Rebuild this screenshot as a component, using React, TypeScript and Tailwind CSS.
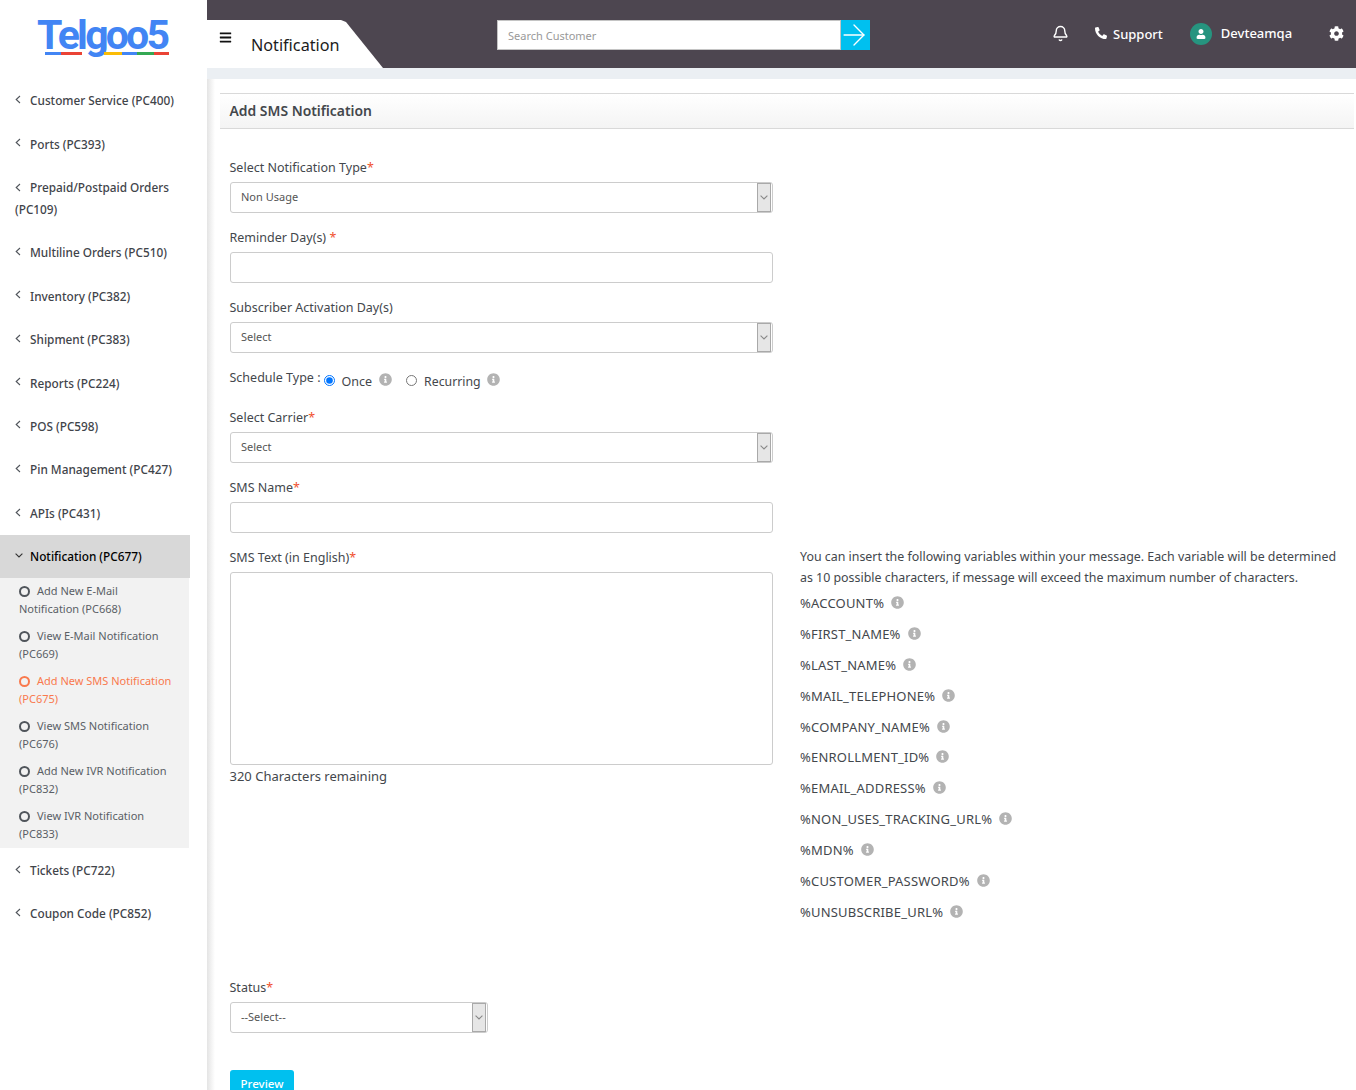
import React from "react";
import { ArrowRight, Bell } from "lucide-react";
import { FaBars, FaCog, FaInfoCircle, FaPhoneAlt, FaUser } from "react-icons/fa";

const navTop = [
  { t: "Customer Service (PC400)", h: "h-[44px]" },
  { t: "Ports (PC393)", h: "h-[43px]" },
  { t: "Prepaid/Postpaid Orders (PC109)", h: "h-[65px]", wrap: true },
  { t: "Multiline Orders (PC510)", h: "h-[44px]" },
  { t: "Inventory (PC382)", h: "h-[43px]" },
  { t: "Shipment (PC383)", h: "h-[44px]" },
  { t: "Reports (PC224)", h: "h-[43px]" },
  { t: "POS (PC598)", h: "h-[43px]" },
  { t: "Pin Management (PC427)", h: "h-[44px]" },
  { t: "APIs (PC431)", h: "h-[44px]" },
];
const subs = [
  ["Add New E-Mail", "Notification (PC668)"],
  ["View E-Mail Notification", "(PC669)"],
  ["Add New SMS Notification", "(PC675)"],
  ["View SMS Notification", "(PC676)"],
  ["Add New IVR Notification", "(PC832)"],
  ["View IVR Notification", "(PC833)"],
];
const vars = [
  "%ACCOUNT%", "%FIRST_NAME%", "%LAST_NAME%", "%MAIL_TELEPHONE%", "%COMPANY_NAME%", "%ENROLLMENT_ID%",
  "%EMAIL_ADDRESS%", "%NON_USES_TRACKING_URL%", "%MDN%", "%CUSTOMER_PASSWORD%", "%UNSUBSCRIBE_URL%",
];

function ChevLeft() {
  return (
    <svg width="6" height="9" viewBox="0 0 6 9" fill="none" className="inline-block shrink-0 mr-[9px] mb-[2px] align-middle">
      <path d="M5 1 L1.2 4.5 L5 8" stroke="#50555b" strokeWidth="1.1" />
    </svg>
  );
}

function ChevDown({ color = "#333", w = 8 }: { color?: string; w?: number }) {
  return (
    <svg width={w} height="5" viewBox="0 0 8 5" fill="none" className="shrink-0">
      <path d="M0.6 0.6 L4 4 L7.4 0.6" stroke={color} strokeWidth="1.1" />
    </svg>
  );
}

function NavItem({ t, h, wrap }: { t: string; h: string; wrap?: boolean }) {
  return (
    <div className={`${h} pl-[15px] pr-2 text-[11.8px] font-medium leading-[22px] text-[#3f444a] ${wrap ? "pt-[11px]" : "flex items-center"}`}>
      <ChevLeft />
      {t}
    </div>
  );
}

function Label({ text, req = true, space }: { text: string; req?: boolean; space?: boolean }) {
  return (
    <div className="h-[15px] leading-[15px] text-[12.5px] text-[#43474c] -ml-[0.5px]">
      {text}
      {space ? " " : ""}
      {req && <span className="text-[#f0502e]">*</span>}
    </div>
  );
}

function Select({ value, className = "w-[543px]" }: { value: string; className?: string }) {
  return (
    <div className={`${className} h-[31px] mt-[7px] border border-[#cccccc] rounded-[3px] flex items-center bg-white`}>
      <span className="flex-1 pl-[10px] text-[11px] text-[#555]">{value}</span>
      <span className="w-[14px] h-[29px] mr-[1px] bg-[#e6e6e6] border border-[#a9a9a9] flex items-center justify-center">
        <ChevDown color="#888" />
      </span>
    </div>
  );
}

function TextBox() {
  return <div className="w-[543px] h-[31px] mt-[7px] border border-[#cccccc] rounded-[3px] bg-white" />;
}

function Info({ className = "" }: { className?: string }) {
  return <FaInfoCircle size={13} className={`text-[#b3b3b3] ${className}`} />;
}

export default function App() {
  return (
    <div className="w-[1356px] h-[1090px] overflow-hidden flex bg-white font-['Noto_Sans','Open_Sans',sans-serif]">
      <aside className="w-[207px] shrink-0">
        <div className="h-[78px] relative">
          <span className="absolute left-[37px] top-[10px] font-['Roboto',sans-serif] font-bold text-[#4285f4] text-[41px] leading-[50px] tracking-[-2.8px]">Telgoo5</span>
          <div className="absolute left-[45px] top-[52px] flex h-[2.5px]">
            <i className="w-[16px] bg-[#4285f4]" />
            <i className="w-[21px] bg-[#ea4335]" />
            <i className="w-[22px] bg-transparent" />
            <i className="w-[18px] bg-[#fbbc05]" />
            <i className="w-[15px] bg-[#4285f4]" />
            <i className="w-[17px] bg-[#34a853]" />
            <i className="w-[15px] bg-[#ea4335]" />
          </div>
        </div>
        {navTop.map((n) => (
          <NavItem key={n.t} {...n} />
        ))}
        <div className="w-[190px] h-[43px] bg-[#d8d8d8] pl-[15px] flex items-center text-[11.8px] font-medium text-black">
          <span className="mr-[7px] mb-[2px] flex"><ChevDown /></span>
          Notification (PC677)
        </div>
        <div className="w-[189px] h-[270px] bg-[#f2f2f2] pl-[19px] pr-1 pt-[4px] text-[11px] leading-[18px] text-[#5a5f66]">
          {subs.map((s, i) => (
            <div key={s[0]} className={`h-[45px] ${i === 2 ? "text-[#f9794d]" : ""}`}>
              <div className="flex items-center">
                <span className={`w-[11px] h-[11px] rounded-full border-2 mr-[7px] ${i === 2 ? "border-[#f9794d]" : "border-[#50555b]"}`} />
                {s[0]}
              </div>
              <div>{s[1]}</div>
            </div>
          ))}
        </div>
        <NavItem t="Tickets (PC722)" h="h-[44px]" />
        <NavItem t="Coupon Code (PC852)" h="h-[42px]" />
      </aside>

      <div className="flex-1 min-w-0 flex flex-col">
        <header className="h-[68px] bg-[#4d4650] flex items-stretch shrink-0 relative">
          <div className="w-[176px] mt-[20px] h-[48px] bg-white [clip-path:polygon(0_0,134px_0,139px_2px,176px_100%,0_100%)] flex">
            <FaBars size={13} className="ml-[12px] mt-[11px] text-[#111]" />
            <span className="ml-[19px] mt-[13px] text-[16.2px] leading-[24px] text-[#1c1c1c]">Notification</span>
          </div>
          <div className="ml-[114px] mt-[20px] flex h-[30px]">
            <div className="w-[344px] bg-white border border-[#c4c4c4] pl-[10px] pt-[2px] flex items-center text-[11px] text-[#999]">Search Customer</div>
            <div className="w-[29px] bg-[#00c0ef] flex items-center justify-center overflow-hidden">
              <ArrowRight size={34} strokeWidth={0.95} className="text-white shrink-0 -ml-[4px]" />
            </div>
          </div>
          <div className="flex-1 flex items-center text-white text-[13px] font-medium">
            <Bell size={17} strokeWidth={2} className="ml-[182px] mb-[2px]" />
            <FaPhoneAlt size={12} className="ml-[26px] mb-[3px]" />
            <span className="ml-[6px] mt-[1px]">Support</span>
            <span className="ml-[27px] w-[22px] h-[22px] rounded-full bg-[#26947f] flex items-center justify-center">
              <FaUser size={10} />
            </span>
            <span className="ml-[9px] -mt-[1px]">Devteamqa</span>
            <FaCog size={15} className="ml-[37px] mb-[2px]" />
          </div>
        </header>
        <div className="h-[11px] bg-[#ebeff3] shrink-0" />
        <div className="flex-1 flex min-h-0">
          <div className="w-[8px] bg-gradient-to-r from-[#e4e4e4] to-white shrink-0" />
          <main className="flex-1 pl-[5px] pr-[2px] pt-[14px]">
            <div className="h-[36px] bg-gradient-to-b from-white to-[#f4f4f4] border-y border-[#d9d9d9] pl-[9.5px] flex items-center text-[13.9px] font-semibold text-[#43474c]">
              Add SMS Notification
            </div>
            <div className="pl-[10px] pt-[31px]">
              <Label text="Select Notification Type" />
              <Select value="Non Usage" />
              <div className="mt-[17px]"><Label text="Reminder Day(s)" space /></div>
              <TextBox />
              <div className="mt-[17px]"><Label text="Subscriber Activation Day(s)" req={false} /></div>
              <Select value="Select" />
              <div className="mt-[17px] h-[37px] flex items-start text-[12.5px] text-[#43474c] -ml-[0.5px]">
                <span className="leading-[15px]">Schedule Type :</span>
                <input type="radio" name="s" defaultChecked className="w-[11px] h-[11px] ml-[3px] mt-[5px] accent-[#0075ff]" />
                <span className="ml-[7px] mt-[4px] leading-[15px]">Once</span>
                <Info className="ml-[7px] mt-[3px]" />
                <input type="radio" name="s" className="w-[11px] h-[11px] ml-[14px] mt-[5px]" />
                <span className="ml-[7px] mt-[4px] leading-[15px] text-[12.3px]">Recurring</span>
                <Info className="ml-[6px] mt-[3px]" />
              </div>
              <div className="mt-[3px]"><Label text="Select Carrier" /></div>
              <Select value="Select" />
              <div className="mt-[17px]"><Label text="SMS Name" /></div>
              <TextBox />
              <div className="flex mt-[17px]">
                <div className="w-[543px] shrink-0">
                  <Label text="SMS Text (in English)" />
                  <div className="w-[543px] h-[193px] mt-[7px] border border-[#cccccc] rounded-[3px]" />
                  <div className="mt-[3px] text-[13px] leading-[17px] text-[#43474c] -ml-[0.5px]">320 Characters remaining</div>
                </div>
                <div className="ml-[27px] -mt-[4px] text-[#43474c]">
                  <p className="leading-[21px] text-[12.4px]">You can insert the following variables within your message. Each variable will be determined<br />as 10 possible characters, if message will exceed the maximum number of characters.</p>
                  <div className="mt-[5px] text-[13px] tracking-[0.2px]">
                    {vars.map((v) => (
                      <div key={v} className="h-[30.9px] flex items-start leading-[21px]">
                        {v}
                        <Info className="ml-[7px] mt-[3px]" />
                      </div>
                    ))}
                  </div>
                </div>
              </div>
              <div className="mt-[47px]"><Label text="Status" /></div>
              <Select value="--Select--" className="w-[258px]" />
              <div className="mt-[37px] w-[64px] h-[30px] rounded-t-[3px] bg-[#00c0ef] text-white text-[11.5px] font-medium pt-[5px] text-center">Preview</div>
            </div>
          </main>
        </div>
      </div>
    </div>
  );
}
